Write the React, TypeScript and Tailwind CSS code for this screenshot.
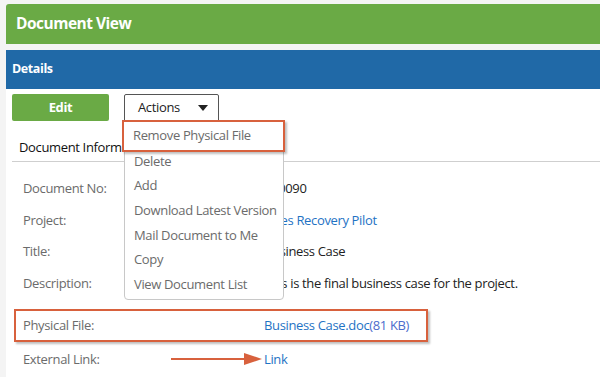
import React from "react";

const ORANGE = "#d8613d";

function Row({ label, children }: { label: string; children: React.ReactNode }) {
  return (
    <div className="flex items-center h-[31.6px]">
      <div className="w-[258px] shrink-0 pl-[17px] text-[#6b6b6b]">{label}</div>
      <div className="flex-1 whitespace-nowrap">{children}</div>
    </div>
  );
}

export default function App() {
  const menu = [
    "Delete",
    "Add",
    "Download Latest Version",
    "Mail Document to Me",
    "Copy",
    "View Document List",
  ];
  return (
    <div
      className="w-[600px] h-[377px] overflow-hidden bg-[#f4f4f4] pl-[6px] pt-[4px] text-[13px] tracking-[-0.35px]"
      style={{ fontFamily: '"Open Sans", "Noto Sans", sans-serif' }}
    >
      <div className="h-[40px] bg-[#6aaa45] rounded-tl-[3px] flex items-center pl-[10px] text-white font-bold text-[15.5px] tracking-[-0.5px]">
        Document View
      </div>
      <div className="mt-[6px] bg-white h-[400px] relative">
        <div className="h-[39px] bg-[#2069a7] flex items-center pl-[6px] text-white font-bold text-[12.5px] tracking-[-0.4px]">
          Details
        </div>
        <div className="flex items-start gap-[15px] pl-[6px] pt-[5px]">
          <div className="w-[97px] h-[27px] bg-[#6aaa45] rounded-[2px] flex items-center justify-center text-white font-bold">
            Edit
          </div>
          <div className="relative">
            <div className="w-[95px] h-[27px] border border-[#555] rounded-t-[2px] bg-white flex items-center pl-[13px] gap-[18px] text-[#222]">
              <span>Actions</span>
              <svg width="10" height="6" viewBox="0 0 10 6">
                <path d="M0 0 L10 0 L5 6 Z" fill="#222" />
              </svg>
            </div>
            <div className="absolute left-0 top-[26px] w-[160px] z-10">
              <div className="bg-white border border-[#c8c8c8] rounded-b-[4px] pt-[28px] pb-[2px] text-[#6b6b6b]">
                {menu.map((m) => (
                  <div key={m} className="h-[24.7px] flex items-center pl-[9px] whitespace-nowrap">
                    {m}
                  </div>
                ))}
              </div>
              <div
                className="absolute left-[-2px] top-0 w-[163px] h-[32px] border-2 bg-white flex items-center pl-[9px] text-[#6b6b6b] whitespace-nowrap shadow-[2px_2px_2px_rgba(0,0,0,0.25)]"
                style={{ borderColor: ORANGE }}
              >
                Remove Physical File
              </div>
            </div>
          </div>
        </div>
        <div className="ml-[6px] mt-[11px] h-[30px] flex items-center pl-[7px] pt-[2px] border-b border-[#cfcfcf] text-[#111]">
          Document Information
        </div>
        <div className="pt-[11px]">
          <Row label="Document No:">
            <span className="text-[#222]">000090</span>
          </Row>
          <Row label="Project:">
            <span className="text-[#1f73c4]">Sales Recovery Pilot</span>
          </Row>
          <Row label="Title:">
            <span className="text-[#222]">Business Case</span>
          </Row>
          <Row label="Description:">
            <span className="text-[#222]">This is the final business case for the project.</span>
          </Row>
          <div
            className="mt-[10px] ml-[8px] w-[414px] h-[33px] border-2 flex items-center shadow-[2px_2px_2px_rgba(0,0,0,0.25)]"
            style={{ borderColor: ORANGE }}
          >
            <div className="w-[248px] shrink-0 pl-[7px] text-[#6b6b6b]">Physical File:</div>
            <div className="text-[#1f73c4] whitespace-nowrap">
              Business Case.doc<span className="text-[#4c6ccc]">(81 KB)</span>
            </div>
          </div>
          <div className="flex items-center h-[34px]">
            <div className="w-[165px] shrink-0 pl-[17px] text-[#6b6b6b]">External Link:</div>
            <svg width="93" height="14" viewBox="0 0 93 14" className="shrink-0">
              <rect x="0" y="6" width="75" height="2" fill={ORANGE} />
              <path d="M73 1 L91 7 L73 13 Z" fill={ORANGE} />
            </svg>
            <span className="text-[#1f73c4]">Link</span>
          </div>
        </div>
      </div>
    </div>
  );
}
